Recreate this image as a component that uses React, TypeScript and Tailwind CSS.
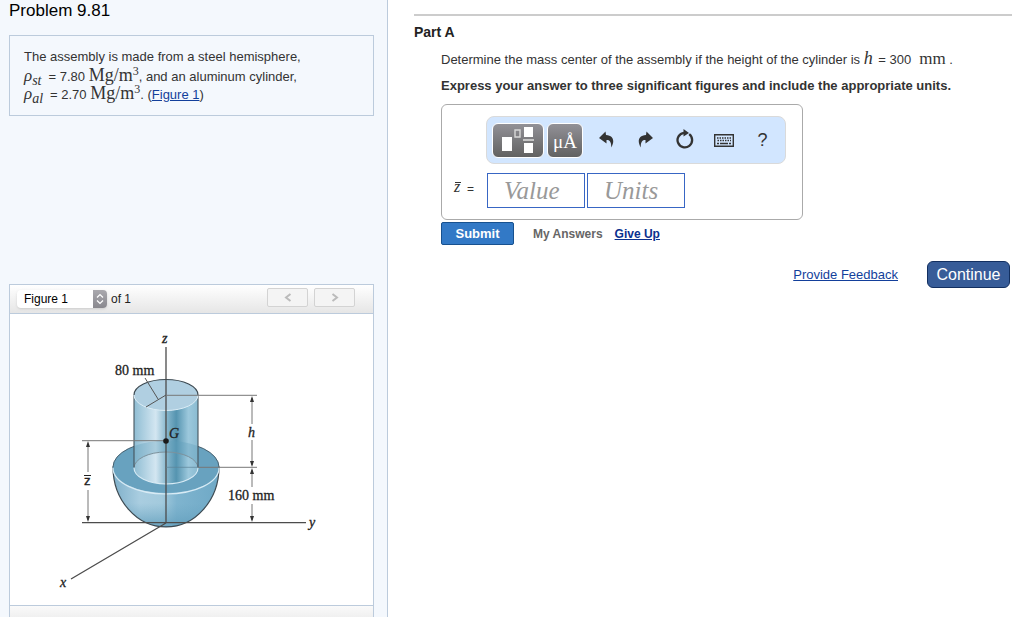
import type { ReactNode } from "react";

const serif = "font-['Liberation_Serif',serif]";

function Density({ sub, value, children }: { sub: string; value: string; children?: ReactNode }) {
    return (
        <p className="h-[18px] whitespace-nowrap">
            <span className={`${serif} italic text-[17px] leading-none`}>ρ</span>
            <sub className={`${serif} italic text-sm leading-[0] mr-[7px]`}>{sub}</sub>
            = {value}{" "}
            <span className={`${serif} text-lg leading-none`}>Mg/m</span>
            <sup className={`${serif} text-xs leading-[0]`}>3</sup>
            {children}
        </p>
    );
}

function Arrow({ x, y, up }: { x: number; y: number; up?: boolean }) {
    const d = up ? 6 : -6;
    return <path d={`M${x} ${y} l-2 ${d} h4 z`} fill="#333" />;
}

function AssemblyDrawing() {
    return (
        <svg
            viewBox="10 314 363 291"
            className="block w-full"
            role="img"
            aria-label="Cylinder standing on a hemisphere"
        >
            <defs>
                <linearGradient id="cylinder">
                    <stop offset="0" stopColor="#8fbdd3" />
                    <stop offset="0.34" stopColor="#d3e6f1" />
                    <stop offset="0.5" stopColor="#8ab9cf" />
                    <stop offset="0.66" stopColor="#5594b0" />
                    <stop offset="0.85" stopColor="#9cc8dc" />
                    <stop offset="1" stopColor="#8abbd1" />
                </linearGradient>
                <linearGradient id="bowl">
                    <stop offset="0" stopColor="#7fb0ca" />
                    <stop offset="0.25" stopColor="#a9cde0" />
                    <stop offset="0.46" stopColor="#a3cadd" />
                    <stop offset="0.6" stopColor="#7fb4cf" />
                    <stop offset="1" stopColor="#6fa9c6" />
                </linearGradient>
                <linearGradient id="bowlShade" x1="0" y1="0" x2="0" y2="1">
                    <stop offset="0.6" stopColor="#6aa5c2" stopOpacity="0" />
                    <stop offset="1" stopColor="#5f9cba" stopOpacity="0.8" />
                </linearGradient>
            </defs>

            {/* hemisphere */}
            <path d="M113 467 A53 60 0 0 0 219 467 Z" fill="url(#bowl)" />
            <path d="M113 467 A53 60 0 0 0 219 467 Z" fill="url(#bowlShade)" stroke="#3d4a52" strokeWidth="1.2" />
            <ellipse cx="166" cy="467" rx="53" ry="26" fill="#68a2bf" />
            <path d="M113 467 A53 26 0 0 1 219 467" fill="none" stroke="#47606e" strokeWidth="1" />
            <path d="M113 468 A53 26 0 0 0 219 468" fill="none" stroke="#d8ebf5" strokeWidth="1.2" />

            {/* cylinder, with the rim showing faintly through its lower part */}
            <path d="M134 395 V468 A32 16 0 0 0 198 468 V395 Z" fill="url(#cylinder)" />
            <path
                d="M134 446 A53 26 0 0 1 198 446 V468 A32 16 0 0 0 134 468 Z"
                fill="#5f9dbb"
                fillOpacity="0.35"
            />
            <path d="M134 468 A32 16 0 0 0 198 468" fill="none" stroke="#d8ebf5" strokeWidth="1.1" />
            <path d="M134 468 A32 16 0 0 1 198 468" fill="none" stroke="#7d929d" strokeWidth="1" />
            <path d="M134 395 V467 M198 395 V467" stroke="#45545d" strokeWidth="1.1" />
            <ellipse cx="166" cy="395" rx="32" ry="15.5" fill="#b0cfe1" />
            <path d="M134 395 A32 15.5 0 0 1 198 395" fill="none" stroke="#3d4a52" strokeWidth="1.2" />
            <path d="M134 395 A32 15.5 0 0 0 198 395" fill="none" stroke="#dcedf6" strokeWidth="1" />

            {/* axes */}
            <path
                d="M166 347 V523 M82 522.7 H306 M166 523 L71 579"
                fill="none"
                stroke="#4c4c4c"
                strokeWidth="1.3"
            />

            {/* dimensions */}
            <path
                d="M82 440.7 H166 M166 395.3 H257 M198 467.3 H257 M88 444 V472 M88 490 V520 M252 398 V424 M252 440 V465 M252 470 V487 M252 504 V520"
                fill="none"
                stroke="#777"
                strokeWidth="1"
            />
            <path d="M166 467.3 H198" stroke="#5f8496" strokeWidth="0.7" />
            <path d="M145 378 L158 399 M166 395 L146 407" stroke="#555" strokeWidth="1" />
            <Arrow x={88} y={441} up />
            <Arrow x={88} y={522} />
            <Arrow x={252} y={396} up />
            <Arrow x={252} y={467} />
            <Arrow x={252} y={468} up />
            <Arrow x={252} y={522} />
            <circle cx="166" cy="441" r="2.8" fill="#1a1a1a" />

            <g className={serif} fill="#222" stroke="#222" strokeWidth="0.3" fontSize="14">
                <text x="115" y="375">80 mm</text>
                <text x="228" y="500">160 mm</text>
                <g fontStyle="italic">
                    <text x="162" y="343">z</text>
                    <text x="169" y="438">G</text>
                    <text x="248" y="437">h</text>
                    <text x="309" y="527">y</text>
                    <text x="60" y="587">x</text>
                </g>
                <text x="84" y="485" className="font-['Liberation_Sans',sans-serif]" fontSize="13">z</text>
                <path d="M84 475.5 H91" strokeWidth="1" />
            </g>
        </svg>
    );
}

function FigurePanel() {
    const pager =
        "w-[41px] h-[19px] flex items-center justify-center border border-[#d3d3d3] rounded-xs bg-[#f4f4f4] text-[#bbb]";
    return (
        <section className="mt-[168px] grow flex flex-col border border-b-0 border-[#bccbdc] bg-white">
            <div className="h-[29px] flex items-center pl-[7px] pr-[18px] border-b border-[#bccbdc] bg-linear-to-b from-white to-[#e6e6e6] text-xs text-[#222]">
                <div className="relative mr-1">
                    <select
                        id="figure"
                        aria-label="Figure"
                        className="appearance-none block w-[90px] h-[18px] pl-[7px] rounded-sm bg-white shadow-sm text-xs text-black"
                    >
                        <option>Figure 1</option>
                    </select>
                    <span className="pointer-events-none absolute right-0 inset-y-0 w-[14px] rounded-r-sm bg-linear-to-b from-[#aaa9ae] to-[#89888e] flex items-center justify-center">
                        <svg width="8" height="12" viewBox="0 0 8 12" fill="none" stroke="white" strokeWidth="1.2">
                            <path d="M1 4.5 4 1.5 7 4.5M1 7.5 4 10.5 7 7.5" />
                        </svg>
                    </span>
                </div>
                of 1
                <div className="ml-auto mb-1 flex gap-1.5">
                    <button className={pager} aria-label="Previous figure">
                        <svg width="8" height="9" viewBox="0 0 8 9" fill="none" stroke="currentColor" strokeWidth="2">
                            <path d="M6.5 1 2 4.5 6.5 8" />
                        </svg>
                    </button>
                    <button className={pager} aria-label="Next figure">
                        <svg width="8" height="9" viewBox="0 0 8 9" fill="none" stroke="currentColor" strokeWidth="2">
                            <path d="M1.5 1 6 4.5 1.5 8" />
                        </svg>
                    </button>
                </div>
            </div>
            <AssemblyDrawing />
            <div className="min-h-3 grow border-t border-[#bccbdc] bg-linear-to-b from-[#fafafa] to-[#f0f0f0]" />
        </section>
    );
}

function Toolbar() {
    const dark =
        "h-[35px] rounded-md border border-white bg-linear-to-b from-[#929197] to-[#626262] text-white flex items-center justify-center";
    const plain = "w-[39px] h-8 flex items-center justify-center text-[#333]";
    return (
        <div className="h-12 ml-[44px] mr-4 pl-[5px] flex items-center rounded-lg border border-[#dadada] bg-[#d2e6ff]">
            <button className={`${dark} w-[52px] mr-[3px]`} aria-label="Templates">
                <svg width="34" height="28" viewBox="0 0 34 28">
                    <path d="M1 11h10v14H1zM23 1h9v10h-9zM23 17h9v10h-9z" fill="white" />
                    <path d="M14 4h5v7h-5z" fill="none" stroke="#d8d8d8" strokeWidth="1.4" />
                    <path d="M22 14h11" stroke="#c6c6c6" strokeWidth="2" />
                </svg>
            </button>
            <button className={`${dark} w-9 mr-1 pt-0.5 ${serif} text-[19px] leading-none`}>μÅ</button>
            <button className={plain} aria-label="Undo">
                <svg width="15" height="17" viewBox="0 0 15 17" fill="currentColor" className="mb-0.5">
                    <path d="M6.5 0.5 0 7 7.5 12.5V9C10.5 8.8 12.5 11 12.2 16.5 15.5 11.5 15.5 4.5 7 4z" />
                </svg>
            </button>
            <button className={plain} aria-label="Redo">
                <svg width="15" height="17" viewBox="0 0 15 17" fill="currentColor" className="mb-0.5">
                    <path d="M8.5 0.5 15 7 7.5 12.5V9C4.5 8.8 2.5 11 2.8 16.5 -0.5 11.5 -0.5 4.5 8 4z" />
                </svg>
            </button>
            <button className={plain} aria-label="Reset">
                <svg width="20" height="20" viewBox="0 0 20 20" className="mb-0.5">
                    <path d="M14.2 5.2A7.3 7.3 0 1 1 9 3.8" fill="none" stroke="currentColor" strokeWidth="2.3" />
                    <path d="M8.5 0 14 4 8.5 7.5z" fill="currentColor" />
                </svg>
            </button>
            <button className={plain} aria-label="Keyboard">
                <svg width="20" height="13" viewBox="0 0 20 13" fill="none" stroke="currentColor">
                    <path d="M0.7 0.7H19.3V12.3H0.7z" strokeWidth="1.4" />
                    <path d="M3 4H17.5M3.5 6.5H17" strokeWidth="1.5" strokeDasharray="1.5 1" />
                    <path d="M3 9.5H5M6 9.5H14M15 9.5H17" strokeWidth="1.5" />
                </svg>
            </button>
            <button className={`${plain} text-lg`} aria-label="Help">?</button>
        </div>
    );
}

function AnswerBox() {
    const field = `w-[98px] h-[35px] px-4 border border-[#3866c4] bg-white ${serif} italic text-[25px] text-[#333] placeholder:text-[#999] outline-none`;
    return (
        <div className="w-[362px] h-[116px] pt-[11px] border border-[#aaa] rounded-md">
            <Toolbar />
            <div className="mt-[9px] flex items-center">
                <span className="w-[45px] pl-3 pb-1 flex items-center gap-1.5 text-xs">
                    <span className={`${serif} italic text-base leading-none`}>
                        <span className="block h-px w-1.5 ml-px bg-[#333] -mb-1" />z
                    </span>
                    =
                </span>
                <input className={field} placeholder="Value" aria-label="Value" />
                <input className={`${field} ml-0.5`} placeholder="Units" aria-label="Units" />
            </div>
        </div>
    );
}

export default function App() {
    return (
        <div className="min-h-screen flex bg-white font-['Liberation_Sans',Arial,sans-serif] text-[13px] leading-[18px] text-[#333]">
            <aside className="w-[388px] shrink-0 flex flex-col pl-[9px] pr-[13px] border-r border-[#bccbdc] bg-[#f4f8fd]">
                <h1 className="pt-px text-[17px] leading-5 text-black">Problem 9.81</h1>
                <div className="mt-[14px] h-[81px] px-[14px] pt-3 border border-[#bccbdc]">
                    <p>The assembly is made from a steel hemisphere,</p>
                    <Density sub="st" value="7.80">, and an aluminum cylinder,</Density>
                    <Density sub="al" value="2.70">
                        . (<a href="#figure" className="text-[#133f9b] underline">Figure 1</a>)
                    </Density>
                </div>
                <FigurePanel />
            </aside>
            <main className="grow min-w-0 pl-[26px] pr-3 pt-[14px]">
                <hr className="border-t-2 border-[#ccc]" />
                <h2 className="mt-[7px] font-bold text-sm leading-[18px] text-[#222]">Part A</h2>
                <div className="pl-[27px]">
                    <p className="mt-2">
                        Determine the mass center of the assembly if the height of the cylinder is{" "}
                        <span className={`${serif} italic text-lg leading-none mr-0.5`}>h</span> = 300
                        <span className={`${serif} text-[17px] leading-none ml-2`}>mm</span> .
                    </p>
                    <p className="mt-2 mb-[9px] font-bold">
                        Express your answer to three significant figures and include the appropriate units.
                    </p>
                    <AnswerBox />
                    <div className="mt-0.5 flex items-center font-bold text-xs">
                        <button className="w-[73px] h-[23px] mr-[19px] border border-[#17518f] rounded-xs bg-[#3279c6] text-[13px] text-white">
                            Submit
                        </button>
                        <span className="mr-3 text-[#666]">My Answers</span>
                        <a href="#give-up" className="text-[#0b308e] underline">Give Up</a>
                    </div>
                </div>
                <div className="mt-4 mr-0.5 flex items-center justify-end gap-[29px]">
                    <a href="#feedback" className="text-[#133f9b] underline">Provide Feedback</a>
                    <button className="w-[83px] h-[27px] border border-[#122f60] rounded-md bg-[#375c98] text-base leading-none text-white">
                        Continue
                    </button>
                </div>
            </main>
        </div>
    );
}
